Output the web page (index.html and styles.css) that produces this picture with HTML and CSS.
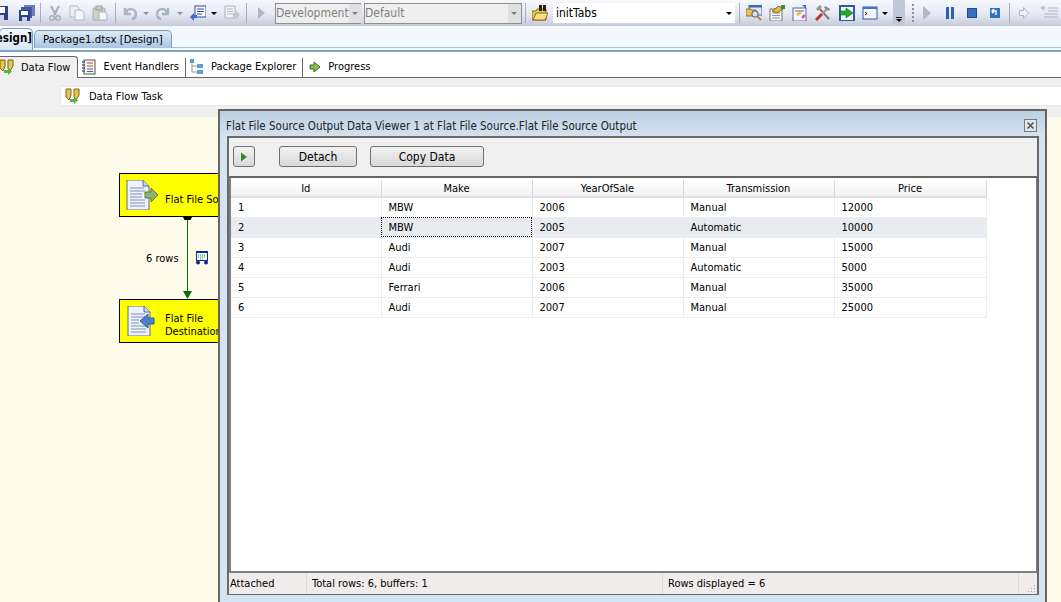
FILE: index.html
```html
<!DOCTYPE html>
<html lang="en">
<head>
<meta charset="utf-8">
<title>Data Viewer</title>
<link rel="stylesheet" href="styles.css">
</head>
<body>
<div class="app">
  <div class="toolbar">
    <svg class="ic" viewBox="0 0 16 16"><rect x="1" y="1" width="14" height="14" fill="#2b3f8f"/><rect x="4" y="2" width="8" height="6" fill="#fff"/><rect x="5" y="10" width="6" height="5" fill="#c9d2ea"/></svg>
    <svg class="ic g10" viewBox="0 0 16 16"><rect x="5" y="0" width="11" height="11" fill="#6f7fb8"/><rect x="2" y="2" width="11" height="11" fill="#47589f"/><rect x="0" y="5" width="11" height="11" fill="#2b3f8f"/><rect x="2" y="6" width="7" height="4" fill="#fff"/><rect x="3" y="12" width="5" height="4" fill="#c9d2ea"/></svg>
    <i class="sep g5"></i>
    <svg class="ic g6" viewBox="0 0 16 16"><path d="M4 1l5 9M12 1L7 10" stroke="#a8adb8" stroke-width="2" fill="none"/><circle cx="5" cy="13" r="2.3" fill="none" stroke="#a8adb8" stroke-width="1.4"/><circle cx="11" cy="13" r="2.3" fill="none" stroke="#a8adb8" stroke-width="1.4"/></svg>
    <svg class="ic g6" viewBox="0 0 16 16"><path d="M1 1h7l2 2v9H1z" fill="#eef0f5" stroke="#b4b8c4"/><path d="M6 5h6l3 3v7H6z" fill="#f6f7fa" stroke="#b4b8c4"/></svg>
    <svg class="ic g7" viewBox="0 0 16 16"><rect x="1" y="3" width="12" height="12" rx="1" fill="#d4cfc0" stroke="#aaa9a4"/><rect x="4" y="1" width="6" height="4" fill="#c9c9c9" stroke="#a0a0a0"/><path d="M7 7h6l2 2v6H7z" fill="#f4f5f8" stroke="#aeb2bd"/></svg>
    <i class="sep g7"></i>
    <svg class="ic g6" viewBox="0 0 16 16"><path d="M3 3v6h6" fill="none" stroke="#a9b2c8" stroke-width="2.4"/><path d="M4 8a5 5 0 1 1 6 6" fill="none" stroke="#a9b2c8" stroke-width="2.4"/></svg>
    <i class="drop drop-off g5"></i>
    <svg class="ic g6" viewBox="0 0 16 16"><path d="M13 3v6H7" fill="none" stroke="#a9b2c8" stroke-width="2.4"/><path d="M12 8a5 5 0 1 0-6 6" fill="none" stroke="#a9b2c8" stroke-width="2.4"/></svg>
    <i class="drop drop-off g6"></i>
    <svg class="ic g7" viewBox="0 0 16 16"><rect x="5" y="1" width="11" height="11" fill="#fff" stroke="#33449a"/><path d="M7 4h7M7 6.500h7M7 9h5" stroke="#33449a"/><path d="M7 10v3H4v3L0 12l4-4v2z" fill="#3b6fd0"/></svg>
    <i class="drop g5"></i>
    <svg class="ic g7" viewBox="0 0 16 16"><path d="M1 1h10v12H1z" fill="#f2f3f7" stroke="#aeb2bd"/><path d="M3 4h6M3 6.500h6M3 9h6" stroke="#b5bac6"/><path d="M9 8h3V5l4 5-4 5v-3H9z" fill="#c4c8d2"/></svg>
    <i class="sep g6"></i>
    <svg class="ic g6" viewBox="0 0 16 16"><path d="M5 2l7 6-7 6z" fill="#b2b8c6"/></svg>
    <div class="combo g6"><span class="combo-text">Development</span><span class="combo-btn"></span></div>
    <div class="combo wide g3"><span class="combo-text">Default</span><span class="combo-btn"></span></div>
    <i class="sep g3"></i>
    <svg class="ic g6" viewBox="0 0 16 16"><path d="M0 6h4l1-2h9v11H0z" fill="#f0c64c" stroke="#8a6a14"/><path d="M1 15l3-7h12l-3 7z" fill="#f8df86" stroke="#8a6a14"/><rect x="7" y="0" width="3" height="6" fill="#222"/><rect x="11" y="0" width="3" height="6" fill="#222"/></svg>
    <div class="find g5"><span class="find-text">initTabs</span><i class="drop"></i></div>
    <i class="sep g4"></i>
    <svg class="ic g6" viewBox="0 0 16 16"><rect x="3" y="0" width="13" height="10" fill="#dfe6f5" stroke="#4d6aa8"/><rect x="3" y="0" width="13" height="2.500" fill="#3c66b8"/><path d="M0 4h5l1 1h4v6H0z" fill="#e8c05a" stroke="#94761e"/><circle cx="9" cy="9" r="3.200" fill="#cfe3f5" stroke="#555"/><path d="M11 11l4 4" stroke="#b08a3a" stroke-width="2"/></svg>
    <svg class="ic g7" viewBox="0 0 16 16"><rect x="1" y="4" width="12" height="12" fill="#f6f6f2" stroke="#777"/><path d="M3 8h8M3 10.500h8M3 13h8" stroke="#8a94b0"/><path d="M3 6l7-5 4 3-6 4z" fill="#e6b84a" stroke="#8a6a14"/><rect x="12" y="0" width="4" height="4" fill="#3a8a3a"/></svg>
    <svg class="ic g7" viewBox="0 0 16 16"><rect x="1" y="3" width="13" height="13" fill="#f5f6fb" stroke="#5a6a90"/><path d="M3 6h9" stroke="#5a6a90"/><path d="M4 9l4-3 2 2-4 3z" fill="#e6c040"/><path d="M9 12l3-3 2 2-3 3z" fill="#d860c8"/><path d="M10 0h4v4z" fill="#3a74c8"/></svg>
    <svg class="ic g7" viewBox="0 0 16 16"><path d="M3 2l11 12" stroke="#777" stroke-width="2"/><path d="M1 4l4-4 2 2-4 4z" fill="#999"/><path d="M8 8l5-5" stroke="#9a9a9a" stroke-width="2"/><path d="M10 1l5 3-1 2-5-3z" fill="#8a8a8a"/><path d="M1 15l6-6" stroke="#c23030" stroke-width="3"/></svg>
    <svg class="ic g8" viewBox="0 0 16 16"><rect x="0" y="0" width="16" height="16" fill="#2b5aa8"/><rect x="2" y="2" width="12" height="13" fill="#f4f6fb"/><path d="M1 6h6V3l7 5-7 5v-3H1z" fill="#22a830" stroke="#0c6c18" stroke-width=".6"/></svg>
    <svg class="ic g7" viewBox="0 0 16 16"><rect x="1" y="2" width="14" height="12" fill="#f5f7fc" stroke="#2b5aa8"/><rect x="1" y="2" width="14" height="2" fill="#3c78c8"/><path d="M3 7l2 1.500L3 10" fill="none" stroke="#222"/></svg>
    <i class="drop g4"></i>
    <span class="overflow g5"><i class="ov-line"></i><i class="ov-arrow"></i></span>
    <span class="grip g7"></span>
    <svg class="ic small g8" viewBox="0 0 10 14"><path d="M1 0l8 7-8 7z" fill="#b2b8c6"/></svg>
    <svg class="ic small g13" viewBox="0 0 10 14"><rect x="1" y="1" width="3" height="12" fill="#2f5fb0"/><rect x="6" y="1" width="3" height="12" fill="#2f5fb0"/></svg>
    <svg class="ic small g12" viewBox="0 0 10 14"><rect x="0.500" y="2.500" width="9" height="9" fill="#3b6fc0" stroke="#24488a"/></svg>
    <svg class="ic small g13" viewBox="0 0 10 14"><rect x="0" y="2" width="10" height="10" fill="#3272c4"/><path d="M6 4v5M2 7l2-2 2 0M4 3L2 5l2 2" fill="none" stroke="#fff" stroke-width="1.400"/></svg>
    <i class="sep g9"></i>
    <svg class="ic small g9" viewBox="0 0 10 14"><path d="M0.500 4.500h4v-3l5 5.500-5 5.500v-3h-4z" fill="#eef0f5" stroke="#b0b5c2"/></svg>
    <svg class="ic g10 listic" viewBox="0 0 20 16"><path d="M7 3H2l3-2M2 3l3 2" fill="none" stroke="#aeb3bf"/><path d="M9 3h10M9 6h10M5 9h14M5 12h14" stroke="#aeb3bf"/></svg>
  </div>

  <div class="doc-tabs">
    <div class="doc-tab active">[Design]</div>
    <div class="doc-tab">Package1.dtsx [Design]</div>
    <div class="doc-fill"></div>
  </div>

  <div class="design-tabs">
    <div class="design-tab active"><svg class="ic" viewBox="0 0 16 16"><path d="M1 1h5v6L4 12 1 9zM9 1h5v6l-3 5-2-3z" fill="#eac54a" stroke="#7a6416"/><path d="M5 11h4V9l4 3.500L9 16v-2H5z" fill="#58b04a"/></svg>Data Flow</div>
    <div class="design-tab"><svg class="ic" viewBox="0 0 16 16"><rect x="3" y="1" width="11" height="14" fill="#f6f3e6" stroke="#555"/><path d="M1 3h3M1 6h3M1 9h3M1 12h3" stroke="#5a5aa8" stroke-width="1.400"/><path d="M6 4h6M6 7h6" stroke="#c05040"/><path d="M6 10h6M6 12.500h6" stroke="#4060b0"/></svg>Event Handlers</div>
    <div class="design-tab"><svg class="ic" viewBox="0 0 16 16"><rect x="1" y="0" width="4" height="4" fill="#5aa0d8"/><rect x="8" y="5" width="6" height="4" fill="#5aa0d8"/><rect x="8" y="11" width="6" height="4" fill="#5aa0d8"/><path d="M3 4v9h5M3 7h5" fill="none" stroke="#999"/></svg>Package Explorer</div>
    <div class="design-tab last"><svg class="ic" viewBox="0 0 16 16"><path d="M4 6h4V3l6 5-6 5v-3H4z" fill="#8ac050" stroke="#3a6a20"/></svg>Progress</div>
  </div>

  <div class="task-row">
    <div class="task-field"><svg class="ic" viewBox="0 0 16 16"><path d="M1 1h5v6L4 12 1 9zM9 1h5v6l-3 5-2-3z" fill="#eac54a" stroke="#7a6416"/><path d="M5 11h4V9l4 3.500L9 16v-2H5z" fill="#58b04a"/></svg><span class="task-text">Data Flow Task</span></div>
  </div>

  <div class="canvas">
    <div class="node node-src">
      <svg class="doc" viewBox="0 0 32 30"><path d="M1 0h16l6 6v24H1z" fill="#eef2fa" stroke="#5b6b9a"/><path d="M17 0v6h6" fill="#c8d4ea" stroke="#5b6b9a"/><path d="M4 8h14M4 11h15M4 14h12M4 17h12M4 20h15M4 23h15M4 26h15" stroke="#7f93bf"/><path d="M19 12h6V8l7 7-7 7v-4h-6z" fill="#8ab56a" stroke="#5f7f4a"/></svg>
      <span class="node-label">Flat File Source</span>
    </div>
    <div class="node node-dst">
      <svg class="doc" viewBox="0 0 32 30"><path d="M2 0h16l6 6v24H2z" fill="#eef2fa" stroke="#5b6b9a"/><path d="M18 0v6h6" fill="#c8d4ea" stroke="#5b6b9a"/><path d="M5 8h14M5 11h15M5 14h8M5 17h8M5 20h15M5 23h15M5 26h15" stroke="#7f93bf"/><path d="M28 12h-6V8l-8 7 8 7v-4h6z" fill="#4f7fd0" stroke="#3a5a9a"/></svg>
      <span class="node-label">Flat File<br>Destination</span>
    </div>
    <svg class="link" viewBox="0 0 20 83"><path d="M5.500 0h10l-2 4h-6z" fill="#000"/><path d="M10.500 4v72" stroke="#0a6e0a"/><path d="M6 75h9l-4.500 8z" fill="#0a6e0a"/></svg>
    <span class="rows-label">6 rows</span>
    <svg class="viewer-ic" viewBox="0 0 14 14"><rect x="1.500" y="0.500" width="11" height="9" fill="#fff" stroke="#102a9a"/><rect x="1" y="0" width="12" height="2" fill="#102a9a"/><path d="M3 4h8M3 6h8M5 8h4" stroke="#1a9a50" stroke-dasharray="1 1"/><circle cx="3" cy="11.500" r="2" fill="#102a9a"/><circle cx="11" cy="11.500" r="2" fill="#102a9a"/></svg>
  </div>

  <div class="dialog">
    <div class="dlg-title"><span>Flat File Source Output Data Viewer 1 at Flat File Source.Flat File Source Output</span><span class="dlg-close"><svg viewBox="0 0 11 11"><path d="M2.500 2.500l6 6M8.500 2.500l-6 6" stroke="#555" stroke-width="1.600"/></svg></span></div>
    <div class="dlg-panel">
      <div class="dlg-tools">
        <button class="btn btn-play"><svg viewBox="0 0 8 12"><path d="M0 0l8 6-8 6z" fill="#2f8a2f"/></svg></button>
        <button class="btn btn-detach">Detach</button>
        <button class="btn btn-copy">Copy Data</button>
      </div>
      <div class="grid-wrap">
        <table class="grid">
          <thead><tr><th>Id</th><th>Make</th><th>YearOfSale</th><th>Transmission</th><th>Price</th></tr></thead>
          <tbody>
            <tr><td>1</td><td>MBW</td><td>2006</td><td>Manual</td><td>12000</td></tr>
            <tr class="sel"><td>2</td><td class="focus">MBW</td><td>2005</td><td>Automatic</td><td>10000</td></tr>
            <tr><td>3</td><td>Audi</td><td>2007</td><td>Manual</td><td>15000</td></tr>
            <tr><td>4</td><td>Audi</td><td>2003</td><td>Automatic</td><td>5000</td></tr>
            <tr><td>5</td><td>Ferrari</td><td>2006</td><td>Manual</td><td>35000</td></tr>
            <tr><td>6</td><td>Audi</td><td>2007</td><td>Manual</td><td>25000</td></tr>
          </tbody>
        </table>
      </div>
      <div class="status">
        <span class="st st-a">Attached</span>
        <span class="st st-b">Total rows: 6, buffers: 1</span>
        <span class="st st-c">Rows displayed = 6</span>
        <span class="st st-d"><svg class="size-grip" viewBox="0 0 9 9"><path d="M7 1h1v1H7zM4 4h1v1H4zM7 4h1v1H7zM1 7h1v1H1zM4 7h1v1H4zM7 7h1v1H7z" fill="#a8a8a8"/></svg></span>
      </div>
    </div>
  </div>
</div>
</body>
</html>
```

FILE: styles.css
```css
* { box-sizing: border-box; }
html, body { margin: 0; padding: 0; }
body { font-family: "DejaVu Sans Condensed", "DejaVu Sans", sans-serif; font-size: 11px; color: #000; background: #fff; }
.app { position: relative; width: 1061px; height: 602px; overflow: hidden; display: flex; flex-direction: column; }

.toolbar { height: 26px; flex: none; display: flex; align-items: center; padding-left: 1px; background: linear-gradient(#f6f8fd, #e6e9f4 55%, #c6cad8); margin-left: -8px; width: 1069px; }
.ic { width: 16px; height: 16px; flex: none; display: block; }
.ic.small { width: 10px; height: 14px; }
.ic.listic { width: 20px; }
.sep { width: 1px; height: 20px; background: #a9aebd; flex: none; }
.drop { width: 6px; height: 3px; flex: none; border: 3px solid transparent; border-top: 3px solid #000; border-bottom: 0; }
.drop-off { border-top-color: #8c90a0; }
.g3 { margin-left: 3px; }
.g4 { margin-left: 4px; }
.g5 { margin-left: 5px; }
.g6 { margin-left: 6px; }
.g7 { margin-left: 7px; }
.g8 { margin-left: 8px; }
.g9 { margin-left: 9px; }
.g10 { margin-left: 10px; }
.g12 { margin-left: 12px; }
.g13 { margin-left: 13px; }
.combo { width: 86px; height: 21px; flex: none; border: 1px solid #8f8f8f; background: #efefef; display: flex; align-items: center; color: #808080; font-size: 12px; padding-left: 0; }
.combo.wide { width: 158px; }
.combo-text { flex: 1; white-space: nowrap; }
.combo-btn { width: 13px; height: 19px; flex: none; background: #e0e0e0; position: relative; }
.combo-btn::after { content: ""; position: absolute; left: 3px; top: 8px; border: 3px solid transparent; border-top: 3px solid #808080; border-bottom: 0; }
.find { width: 182px; height: 20px; flex: none; background: #fff; font-size: 12px; padding: 0 3px; display: flex; align-items: center; }
.find-text { flex: 1; }
.overflow { width: 12px; height: 26px; flex: none; background: #c3c8d6; border-radius: 0 0 4px 4px; display: flex; flex-direction: column; align-items: center; justify-content: flex-end; padding-bottom: 4px; gap: 1px; }
.ov-line { width: 6px; height: 1px; background: #000; }
.ov-arrow { width: 6px; height: 3px; border: 3px solid transparent; border-top: 3px solid #000; border-bottom: 0; }
.grip { width: 2px; height: 18px; flex: none; background: repeating-linear-gradient(#8b90a2 0 2px, transparent 2px 4px); }

.doc-tabs { height: 26px; flex: none; display: flex; align-items: flex-end; padding-bottom: 2px; background: #f4f7fd; border-bottom: 2px solid #7ba3c4; }
.doc-tab { height: 18px; font-size: 11.300px; padding: 2px 8px 0 8px; border: 1px solid #7a9fc0; border-bottom: 0; border-radius: 5px 5px 0 0; background: linear-gradient(#dcebf7, #a9c6e0); margin-left: 1px; white-space: nowrap; flex: none; }
.doc-tab.active { font-weight: bold; font-size: 11.500px; margin-bottom: -2px; padding: 2px 0 0 0; height: 22px; width: 34px; margin-left: -1px; direction: rtl; overflow: hidden; background: linear-gradient(#f3f9fe, #d5e8f6); }
.doc-fill { flex: 1; height: 1px; background: #a9c0d4; }

.design-tabs { height: 26px; flex: none; display: flex; align-items: flex-end; background: #fff; border-bottom: 1px solid #666; }
.design-tab { height: 19px; display: flex; align-items: center; gap: 6px; padding: 0 6px 2px 3px; border-right: 1px solid #666; white-space: nowrap; flex: none; }
.design-tab.last { border-right: 0; }
.design-tab.active { margin-left: -4px; padding: 0 7px 1px 2px; height: 22px; margin-bottom: -1px; background: #f0f0f0; border: 1px solid #666; border-bottom: 0; border-radius: 0 4px 0 0; }

.task-row { height: 39px; flex: none; background: #f0f0f0; padding: 8px 0 0 60px; }
.task-field { height: 20px; background: #fff; border: 1px solid #e8e8e8; border-right: 0; border-radius: 2px 0 0 2px; display: flex; align-items: center; gap: 8px; padding-left: 4px; }
.task-text { padding-top: 1px; }

.canvas { position: relative; flex: 1; background: #fffbea; }
.node { position: absolute; left: 119px; width: 100px; height: 44px; background: #ffff00; border: 1px solid #000; display: flex; align-items: center; gap: 7px; padding-left: 6px; overflow: hidden; white-space: nowrap; }
.node-src { top: 56px; }
.node-dst { top: 182px; }
.doc { width: 32px; height: 30px; flex: none; }
.node-label { line-height: 13px; padding-top: 7px; }
.node-src .node-label { padding-top: 9px; }
.link { position: absolute; left: 177px; top: 99px; width: 20px; height: 83px; }
.rows-label { position: absolute; left: 146px; top: 135px; }
.viewer-ic { position: absolute; left: 195px; top: 134px; width: 14px; height: 14px; }

.dialog { position: absolute; left: 218px; top: 109px; width: 829px; height: 500px; background: linear-gradient(#bdd0e2, #d6e3f1 28px); border: 2px solid #666; display: flex; flex-direction: column; padding: 0 7px; }
.dlg-title { height: 25px; flex: none; display: flex; align-items: center; justify-content: space-between; font-size: 11.500px; padding: 5px 1px 0 0; color: #222; white-space: nowrap; }
.dlg-title > span:first-child { margin-left: -1px; }
.dlg-close { width: 13px; height: 13px; border: 1px solid #777; background: #dfe6ee; display: block; margin-top: -1px; }
.dlg-close svg { display: block; width: 11px; height: 11px; }
.dlg-panel { width: 812px; height: 459px; flex: none; display: flex; flex-direction: column; border: 2px solid #6a6a6a; border-bottom-width: 1px; background: #f0f0f0; }
.dlg-tools { height: 40px; flex: none; display: flex; align-items: center; padding: 0 0 1px 4px; border-bottom: 2px solid #666; }
.btn { height: 21px; flex: none; border: 1px solid #707070; border-radius: 3px; background: linear-gradient(#f2f2f2, #d8d8d8); font: inherit; font-size: 12px; padding: 0; color: #000; }
.btn-play { width: 22px; display: flex; align-items: center; justify-content: center; }
.btn-play svg { width: 6px; height: 10px; }
.btn-detach { width: 78px; margin-left: 24px; }
.btn-copy { width: 114px; margin-left: 13px; }

.grid-wrap { flex: 1; min-height: 0; background: #fff; border: 2px solid #808080; border-top: 0; padding-top: 2px; border-right-width: 1px; }
.grid { border-collapse: collapse; table-layout: fixed; width: 755px; }
.grid th { height: 17px; padding: 1px 0 0; font-weight: normal; background: linear-gradient(#fff, #f1f1f3); border-right: 1px solid #d8d8d8; border-bottom: 2px solid #e0e0e0; width: 151px; }
.grid th:first-child { width: 150px; }
.grid th:last-child { width: 152px; }
.grid td { height: 20px; padding: 0 0 0 7px; border-right: 1px solid #ececec; border-bottom: 1px solid #ececec; }
.grid .sel td { background: #e8ecf0; }
.grid .sel td.focus { outline: 1px dotted #000; outline-offset: -1px; }

.status { height: 21px; flex: none; display: flex; align-items: center; background: #efeceb; }
.st { height: 100%; display: flex; align-items: center; border-right: 1px solid #dcdcdc; white-space: nowrap; }
.st-a { width: 78px; padding-left: 1px; }
.st-b { width: 356px; padding-left: 5px; }
.st-c { width: 356px; padding-left: 5px; }
.st-d { flex: 1; border-right: 0; justify-content: flex-end; align-items: flex-end; padding: 0 1px 1px 0; }
.size-grip { width: 9px; height: 9px; display: block; }
```
